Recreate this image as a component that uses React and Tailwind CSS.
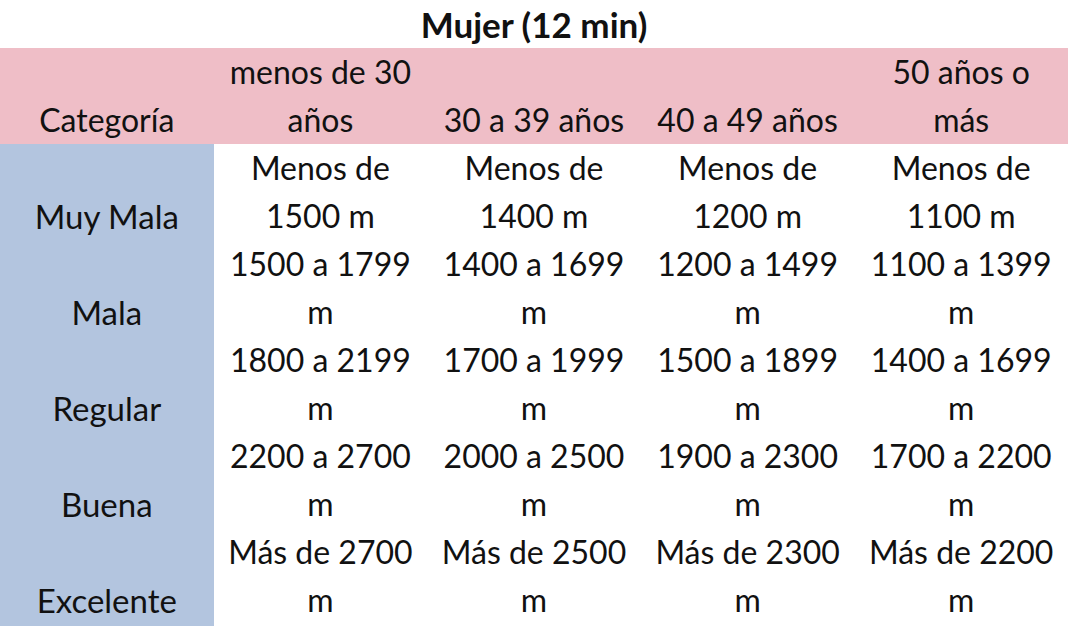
const headers = [
  ["Categoría"],
  ["menos de 30", "años"],
  ["30 a 39 años"],
  ["40 a 49 años"],
  ["50 años o", "más"],
];

const rows = [
  ["Muy Mala", ["Menos de", "1500 m"], ["Menos de", "1400 m"], ["Menos de", "1200 m"], ["Menos de", "1100 m"]],
  ["Mala", ["1500 a 1799", "m"], ["1400 a 1699", "m"], ["1200 a 1499", "m"], ["1100 a 1399", "m"]],
  ["Regular", ["1800 a 2199", "m"], ["1700 a 1999", "m"], ["1500 a 1899", "m"], ["1400 a 1699", "m"]],
  ["Buena", ["2200 a 2700", "m"], ["2000 a 2500", "m"], ["1900 a 2300", "m"], ["1700 a 2200", "m"]],
  ["Excelente", ["Más de 2700", "m"], ["Más de 2500", "m"], ["Más de 2300", "m"], ["Más de 2200", "m"]],
];

function Cell({ lines, className = "" }) {
  return (
    <div className={`flex flex-col justify-end items-center ${className}`}>
      {lines.map((l, i) => (
        <span key={i} className="whitespace-nowrap">
          {l}
        </span>
      ))}
    </div>
  );
}

export default function App() {
  return (
    <div
      className="w-[1068px] h-[626px] bg-white text-[#111] overflow-hidden"
      style={{ fontFamily: "Lato, 'Open Sans', sans-serif" }}
    >
      {/* Title */}
      <div className="h-[48px] flex items-center justify-center text-[35px] font-bold">
        Mujer (12 min)
      </div>

      <div className="grid grid-cols-5 text-[32px] leading-[48px]">
        {/* Header */}
        {headers.map((h, i) => (
          <Cell key={i} lines={h} className="bg-[#efbec7] h-[96px]" />
        ))}

        {/* Body */}
        {rows.map((r, ri) => (
          <div key={ri} className="contents">
            <Cell lines={[r[0]]} className="bg-[#b3c5df] h-[96px] text-[33px]" />
            {r.slice(1).map((c, ci) => (
              <Cell key={ci} lines={c} className="h-[96px]" />
            ))}
          </div>
        ))}
        <div className="bg-[#b3c5df] h-[8px]" />
      </div>
    </div>
  );
}
